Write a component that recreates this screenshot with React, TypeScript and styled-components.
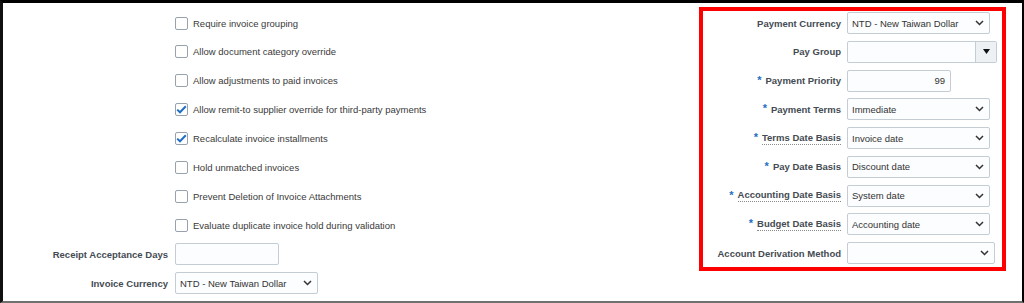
import React from 'react';
import styled, { createGlobalStyle, css } from 'styled-components';

const GlobalStyle = createGlobalStyle`
  html, body {
    margin: 0;
    padding: 0;
    background: #ffffff;
  }
  body {
    font-family: "Liberation Sans", Arial, sans-serif;
    font-size: 9.5px;
    color: #333333;
  }
`;

const Frame = styled.div`
  box-sizing: border-box;
  width: 1024px;
  height: 303px;
  border-top: 3px solid #000;
  border-left: 3px solid #111;
  border-right: 2px solid #000;
  border-bottom: 2px solid #707070;
  display: flex;
  align-items: flex-start;
  overflow: hidden;
`;

const LeftForm = styled.div`
  display: grid;
  grid-template-columns: 165px auto;
  column-gap: 7px;
  row-gap: 6.9px;
  grid-auto-rows: 22px;
  align-items: center;
  padding-top: 9px;
`;

const Panel = styled.div`
  box-sizing: border-box;
  margin-left: auto;
  margin-right: 16px;
  margin-top: 4px;
  width: 307px;
  height: 264px;
  border: 4px solid #ff0000;
  display: grid;
  grid-template-columns: 138px 150px;
  column-gap: 6px;
  row-gap: 6.75px;
  grid-auto-rows: 22px;
  align-items: center;
  align-content: start;
  padding-top: 1px;
`;

const Label = styled.div`
  grid-column: 1;
  justify-self: end;
  font-weight: bold;
  color: #444b52;
  white-space: nowrap;
  display: flex;
  align-items: center;
  gap: 4px;
`;

const LabelText = styled.span<{ $dotted?: boolean }>`
  ${p => p.$dotted && css`
    border-bottom: 1px dotted #8a8a8a;
    padding-bottom: 1px;
  `}
`;

const Star = styled.span`
  color: #1d6fc4;
  font-weight: bold;
  font-size: 11px;
  position: relative;
  top: -1px;
`;

const CheckItem = styled.label`
  grid-column: 2;
  display: flex;
  align-items: center;
  gap: 5px;
  white-space: nowrap;
  color: #3a3a3a;
`;

const Box = styled.span`
  box-sizing: border-box;
  width: 13px;
  height: 13px;
  border: 1px solid #98a2ad;
  border-radius: 2px;
  background: #fff;
  display: flex;
  align-items: center;
  justify-content: center;
`;

const Field = styled.div<{ $width: number; $align?: 'left' | 'right' }>`
  grid-column: 2;
  box-sizing: border-box;
  width: ${p => p.$width}px;
  height: 22px;
  border: 1px solid #c4ccd4;
  border-radius: 2px;
  background: #fcfdfe;
  display: flex;
  align-items: center;
  justify-content: ${p => (p.$align === 'right' ? 'flex-end' : 'space-between')};
  padding: 0 5px 0 4px;
  color: #333;
  white-space: nowrap;
`;

const ComboField = styled(Field)`
  padding: 0 0 0 4px;
`;

const ComboButton = styled.span`
  box-sizing: border-box;
  width: 21px;
  height: 100%;
  border-left: 1px solid #c4ccd4;
  background: #eef1f4;
  display: flex;
  align-items: center;
  justify-content: center;
`;

const Chevron = () => (
  <svg width="9" height="6" viewBox="0 0 9 6">
    <path d="M1 1 L4.5 4.5 L8 1" fill="none" stroke="#333" strokeWidth="1.5" />
  </svg>
);

const Tick = () => (
  <svg width="11" height="9" viewBox="0 0 11 9">
    <path d="M1.2 4.6 L4 7.3 L9.8 1.3" fill="none" stroke="#1f6fc5" strokeWidth="2" />
  </svg>
);

const Triangle = () => (
  <svg width="7" height="5" viewBox="0 0 7 5">
    <path d="M0 0 L7 0 L3.5 5 Z" fill="#111" />
  </svg>
);

const checks: [string, boolean][] = [
  ['Require invoice grouping', false],
  ['Allow document category override', false],
  ['Allow adjustments to paid invoices', false],
  ['Allow remit-to supplier override for third-party payments', true],
  ['Recalculate invoice installments', true],
  ['Hold unmatched invoices', false],
  ['Prevent Deletion of Invoice Attachments', false],
  ['Evaluate duplicate invoice hold during validation', false],
];

type Row = {
  label: string;
  required?: boolean;
  dotted?: boolean;
  value: string;
  kind: 'select' | 'combo' | 'number';
  width: number;
};

const rows: Row[] = [
  { label: 'Payment Currency', value: 'NTD - New Taiwan Dollar', kind: 'select', width: 143 },
  { label: 'Pay Group', value: '', kind: 'combo', width: 150 },
  { label: 'Payment Priority', required: true, value: '99', kind: 'number', width: 104 },
  { label: 'Payment Terms', required: true, value: 'Immediate', kind: 'select', width: 143 },
  { label: 'Terms Date Basis', required: true, dotted: true, value: 'Invoice date', kind: 'select', width: 143 },
  { label: 'Pay Date Basis', required: true, value: 'Discount date', kind: 'select', width: 143 },
  { label: 'Accounting Date Basis', required: true, dotted: true, value: 'System date', kind: 'select', width: 143 },
  { label: 'Budget Date Basis', required: true, dotted: true, value: 'Accounting date', kind: 'select', width: 143 },
  { label: 'Account Derivation Method', value: '', kind: 'select', width: 148 },
];

const renderField = (r: Row) => {
  if (r.kind === 'combo')
    return (
      <ComboField $width={r.width}>
        <span>{r.value}</span>
        <ComboButton>
          <Triangle />
        </ComboButton>
      </ComboField>
    );
  if (r.kind === 'number')
    return (
      <Field $width={r.width} $align="right">
        {r.value}
      </Field>
    );
  return (
    <Field $width={r.width}>
      <span>{r.value}</span>
      <Chevron />
    </Field>
  );
};

export default function App() {
  return (
    <>
      <GlobalStyle />
      <Frame>
        <LeftForm>
          {checks.map(([text, on]) => (
            <CheckItem key={text}>
              <Box>{on && <Tick />}</Box>
              {text}
            </CheckItem>
          ))}
          <Label>Receipt Acceptance Days</Label>
          <Field $width={104} />
          <Label>Invoice Currency</Label>
          <Field $width={143}>
            <span>NTD - New Taiwan Dollar</span>
            <Chevron />
          </Field>
        </LeftForm>
        <Panel>
          {rows.map(r => (
            <React.Fragment key={r.label}>
              <Label>
                {r.required && <Star>*</Star>}
                <LabelText $dotted={r.dotted}>{r.label}</LabelText>
              </Label>
              {renderField(r)}
            </React.Fragment>
          ))}
        </Panel>
      </Frame>
    </>
  );
}
